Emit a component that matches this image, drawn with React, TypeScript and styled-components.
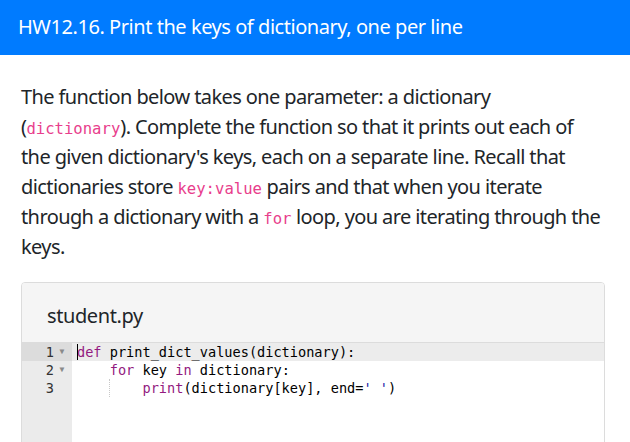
import React from 'react';
import styled, { createGlobalStyle } from 'styled-components';

const GlobalStyle = createGlobalStyle`
  html, body {
    margin: 0;
    padding: 0;
    background: #fff;
    height: 100%;
  }
  body {
    font-family: 'Noto Sans', 'Open Sans', sans-serif;
    color: #212529;
    overflow: hidden;
  }
`;

const TitleBar = styled.header`
  height: 55px;
  background: #007bff;
  color: #fff;
  display: flex;
  align-items: center;
  padding: 0 18px 3px;
  box-sizing: border-box;
  font-size: 20px;
  letter-spacing: -0.45px;
`;

const Body = styled.main`
  padding: 27px 25px 0 21px;
`;

const Prompt = styled.p`
  margin: 0 0 20px;
  font-size: 20px;
  line-height: 30px;
  letter-spacing: -0.6px;
  white-space: nowrap;
`;

const Code = styled.code`
  font-family: 'DejaVu Sans Mono', monospace;
  font-size: 15.6px;
  line-height: 1;
  letter-spacing: 0;
  color: #e83e8c;
`;

const Card = styled.section`
  border: 1px solid #dcdcdc;
  border-radius: 4px;
  overflow: hidden;
`;

const CardHeader = styled.div`
  height: 60px;
  background: #f5f5f5;
  border-bottom: 1px solid #dcdcdc;
  display: flex;
  align-items: center;
  padding: 5px 25px 0;
  box-sizing: border-box;
  font-size: 20px;
  letter-spacing: -0.4px;
`;

const Editor = styled.div`
  display: flex;
  height: 110px;
  font-family: 'DejaVu Sans Mono', monospace;
  font-size: 13.6px;
  line-height: 18px;
`;

const Gutter = styled.div`
  width: 50px;
  background: #ebebeb;
  color: #333;
  flex: none;
`;

const GutterCell = styled.div<{ active?: boolean }>`
  height: 18px;
  display: flex;
  justify-content: flex-end;
  align-items: center;
  padding-right: 2px;
  background: ${({ active }) => (active ? '#dcdcdc' : 'transparent')};
`;

const FoldMark = styled.span<{ show?: boolean }>`
  width: 16px;
  text-align: center;
  font-size: 8px;
  color: #8a8a8a;
  visibility: ${({ show }) => (show ? 'visible' : 'hidden')};
`;

const Lines = styled.div`
  flex: 1;
  min-width: 0;
`;

const Line = styled.div<{ active?: boolean }>`
  position: relative;
  height: 18px;
  padding-left: 5px;
  white-space: pre;
  color: #000;
  background: ${({ active }) => (active ? '#ececec' : 'transparent')};
`;

const Caret = styled.span`
  position: absolute;
  left: 5px;
  top: 1px;
  width: 1px;
  height: 16px;
  background: #000;
`;

const Guide = styled.span`
  position: absolute;
  left: 37px;
  top: 0;
  height: 18px;
  border-left: 1px dotted #c8c8c8;
`;

const Kw = styled.span`
  color: #931a80;
`;

const Str = styled.span`
  color: #1a1aa6;
`;

const gutter = [
  { n: 1, fold: true, active: true },
  { n: 2, fold: true },
  { n: 3 },
];

export default function App() {
  return (
    <>
      <GlobalStyle />
      <TitleBar>HW12.16. Print the keys of dictionary, one per line</TitleBar>
      <Body>
        <Prompt>
          The function below takes one parameter: a dictionary
          <br />
          (<Code>dictionary</Code>). Complete the function so that it prints out each of
          <br />
          the given dictionary's keys, each on a separate line. Recall that
          <br />
          dictionaries store <Code>key:value</Code> pairs and that when you iterate
          <br />
          through a dictionary with a <Code>for</Code> loop, you are iterating through the
          <br />
          keys.
        </Prompt>
        <Card>
          <CardHeader>student.py</CardHeader>
          <Editor>
            <Gutter>
              {gutter.map((g) => (
                <GutterCell key={g.n} active={g.active}>
                  {g.n}
                  <FoldMark show={g.fold}>▼</FoldMark>
                </GutterCell>
              ))}
            </Gutter>
            <Lines>
              <Line active>
                <Caret />
                <Kw>def</Kw> print_dict_values(dictionary):
              </Line>
              <Line>
                {'    '}
                <Kw>for</Kw> key <Kw>in</Kw> dictionary:
              </Line>
              <Line>
                <Guide />
                {'        '}
                <Kw>print</Kw>(dictionary[key], end=<Str>' '</Str>)
              </Line>
            </Lines>
          </Editor>
        </Card>
      </Body>
    </>
  );
}
